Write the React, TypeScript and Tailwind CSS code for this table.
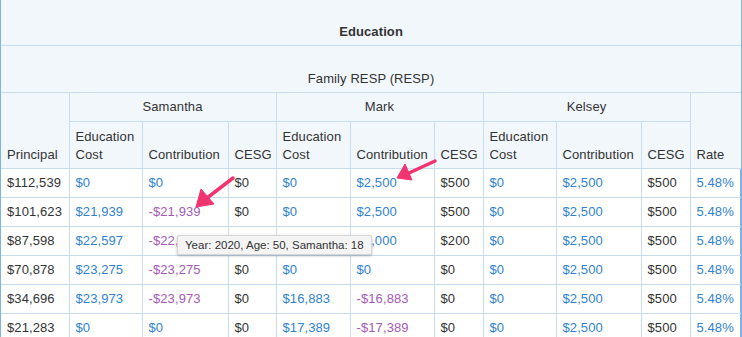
import React from 'react';

type Cell = { v: string; c: 'k' | 'b' | 'p' };

const k = (v: string): Cell => ({ v, c: 'k' });
const b = (v: string): Cell => ({ v, c: 'b' });
const p = (v: string): Cell => ({ v, c: 'p' });

const rows: Cell[][] = [
  [k('$112,539'), b('$0'), b('$0'), k('$0'), b('$0'), b('$2,500'), k('$500'), b('$0'), b('$2,500'), k('$500'), b('5.48%')],
  [k('$101,623'), b('$21,939'), p('-$21,939'), k('$0'), b('$0'), b('$2,500'), k('$500'), b('$0'), b('$2,500'), k('$500'), b('5.48%')],
  [k('$87,598'), b('$22,597'), p('-$22,597'), k('$0'), b('$0'), b('$2,000'), k('$200'), b('$0'), b('$2,500'), k('$500'), b('5.48%')],
  [k('$70,878'), b('$23,275'), p('-$23,275'), k('$0'), b('$0'), b('$0'), k('$0'), b('$0'), b('$2,500'), k('$500'), b('5.48%')],
  [k('$34,696'), b('$23,973'), p('-$23,973'), k('$0'), b('$16,883'), p('-$16,883'), k('$0'), b('$0'), b('$2,500'), k('$500'), b('5.48%')],
  [k('$21,283'), b('$0'), b('$0'), k('$0'), b('$17,389'), p('-$17,389'), k('$0'), b('$0'), b('$2,500'), k('$500'), b('5.48%')],
];

const widths = [68, 73, 86, 48, 74, 84, 49, 73, 85, 49, 51];

const colorClass = {
  k: 'text-[#333333]',
  b: 'text-[#2f82d0]',
  p: 'text-[#a55bb6]',
};

const th = 'border border-[#c8dcef] bg-[#f2f7fc] px-[6px] font-normal text-[#333333]';

export default function App() {
  return (
    <div className="relative h-[337px] w-[742px] overflow-hidden bg-white font-['Liberation_Sans',Arial,sans-serif] text-[13px] leading-[18px] tracking-[0.1px]">
      <div className="w-[742px] border-l border-r-2 border-[#7eb3e6]">
        <table className="w-[739px] table-fixed border-collapse">
          <colgroup>
            {widths.map((w, i) => (
              <col key={i} style={{ width: w }} />
            ))}
          </colgroup>
          <thead>
            <tr className="h-[45px]">
              <th colSpan={11} className={`${th} border-t-0 border-l-0 border-r-0 pb-[4px] align-bottom text-center font-semibold`}>
                Education
              </th>
            </tr>
            <tr className="h-[47px]">
              <th colSpan={11} className={`${th} border-l-0 border-r-0 pb-[4px] align-bottom text-center`}>
                Family RESP (RESP)
              </th>
            </tr>
            <tr className="h-[29px]">
              <th rowSpan={2} className={`${th} border-l-0 pb-[4px] align-bottom text-left`}>
                Principal
              </th>
              <th colSpan={3} className={`${th} align-middle text-center`}>
                Samantha
              </th>
              <th colSpan={3} className={`${th} align-middle text-center`}>
                Mark
              </th>
              <th colSpan={3} className={`${th} align-middle text-center`}>
                Kelsey
              </th>
              <th rowSpan={2} className={`${th} border-r-0 pb-[4px] align-bottom text-left`}>
                Rate
              </th>
            </tr>
            <tr className="h-[47px]">
              {['Education Cost', 'Contribution', 'CESG', 'Education Cost', 'Contribution', 'CESG', 'Education Cost', 'Contribution', 'CESG'].map(
                (h, i) => (
                  <th key={i} className={`${th} pb-[4px] align-bottom text-left`}>
                    {h === 'Education Cost' ? (
                      <>
                        Education
                        <br />
                        Cost
                      </>
                    ) : (
                      h
                    )}
                  </th>
                )
              )}
            </tr>
          </thead>
          <tbody>
            {rows.map((row, r) => (
              <tr key={r} className="h-[29px]">
                {row.map((cell, i) => (
                  <td
                    key={i}
                    className={`border border-[#c8dcef] px-[6px] align-middle whitespace-nowrap ${colorClass[cell.c]} ${
                      i === 0 ? 'border-l-0' : ''
                    } ${i === 10 ? 'border-r-0' : ''}`}
                  >
                    {cell.v}
                  </td>
                ))}
              </tr>
            ))}
          </tbody>
        </table>
      </div>

      {/* tooltip */}
      <div className="absolute left-[177px] top-[235px] h-[20px] rounded-[2px] border border-[#d6d6d6] bg-[#f4f4f4] px-[7px] text-[11.5px] leading-[18px] tracking-normal text-[#333333] shadow-[0_1px_3px_rgba(0,0,0,0.25)]">
        Year: 2020, Age: 50, Samantha: 18
      </div>

      {/* annotation arrows */}
      <svg className="pointer-events-none absolute left-0 top-0" width="742" height="337">
        <g fill="#f0346f" stroke="#f0346f">
          <line x1="233" y1="178" x2="207" y2="198" strokeWidth="3.5" strokeLinecap="round" />
          <polygon points="196,207 201,189 214,204" strokeWidth="1" strokeLinejoin="round" />
          <line x1="435" y1="161" x2="409" y2="173" strokeWidth="3.5" strokeLinecap="round" />
          <polygon points="397,178 405,164 412,180" strokeWidth="1" strokeLinejoin="round" />
        </g>
      </svg>
    </div>
  );
}
